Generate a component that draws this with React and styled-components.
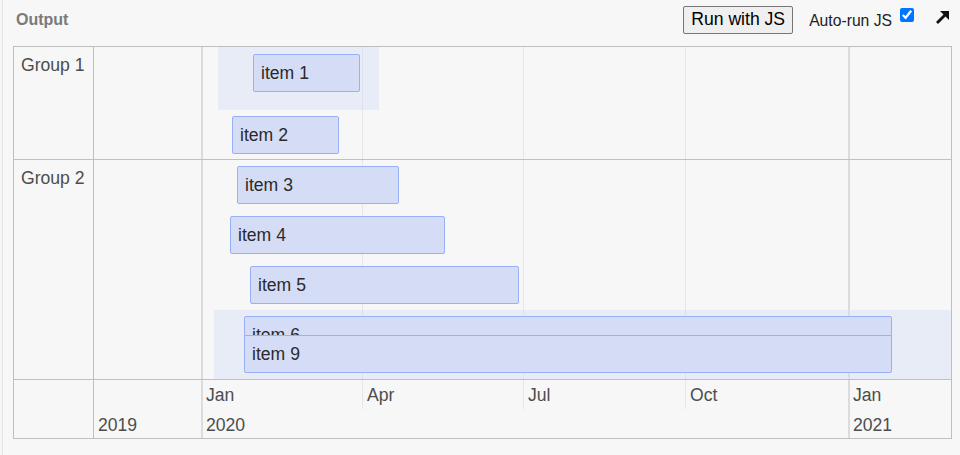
import React from "react";
import styled, { createGlobalStyle } from "styled-components";

const GlobalStyle = createGlobalStyle`
  html, body {
    margin: 0;
    padding: 0;
    background: #f7f7f7;
    width: 960px;
    height: 455px;
    overflow: hidden;
  }
  body {
    font-family: "Liberation Sans", Arial, sans-serif;
  }
`;

// x positions are relative to the item panel (it starts at page x = 94)
const majorLines = [107, 754];
const minorLines = [268, 429, 591];

const minorLabels = [
  { x: 112, text: "Jan" },
  { x: 273, text: "Apr" },
  { x: 434, text: "Jul" },
  { x: 596, text: "Oct" },
  { x: 759, text: "Jan" },
];

const majorLabels = [
  { x: 4, text: "2019" },
  { x: 112, text: "2020" },
  { x: 759, text: "2021" },
];

const groups = [
  {
    name: "Group 1",
    height: 113,
    backgrounds: [{ left: 124, top: 0, width: 161, height: 63 }],
    items: [
      { id: 1, left: 159, top: 7, width: 107 },
      { id: 2, left: 138, top: 69, width: 107 },
    ],
  },
  {
    name: "Group 2",
    height: 220,
    backgrounds: [{ left: 120, top: 150, width: 737, height: 69 }],
    items: [
      { id: 3, left: 143, top: 6, width: 162 },
      { id: 4, left: 136, top: 56, width: 215 },
      { id: 5, left: 156, top: 106, width: 269 },
      { id: 6, left: 150, top: 156, width: 648 },
      { id: 9, left: 150, top: 175, width: 648 },
    ],
  },
];

function ExpandIcon() {
  return (
    <svg width="13" height="13" viewBox="0 0 13 13">
      <polygon points="4,0 13,0 13,9" fill="#111" />
      <line x1="1" y1="12" x2="9" y2="4" stroke="#111" strokeWidth="2.8" />
    </svg>
  );
}

export default function App() {
  return (
    <Page>
      <GlobalStyle />
      <Header>
        <Title>Output</Title>
        <Controls>
          <RunButton>Run with JS</RunButton>
          <AutoRun>
            Auto-run JS
            <Check type="checkbox" defaultChecked />
          </AutoRun>
          <Expand>
            <ExpandIcon />
          </Expand>
        </Controls>
      </Header>

      <Timeline>
        <LabelColumn>
          {groups.map((g) => (
            <GroupLabel key={g.name} $height={g.height}>
              {g.name}
            </GroupLabel>
          ))}
          <AxisSpacer />
        </LabelColumn>

        <Panel>
          {minorLines.map((x) => (
            <GridLine key={x} style={{ left: x }} $minor />
          ))}
          {majorLines.map((x) => (
            <GridLine key={x} style={{ left: x }} />
          ))}

          {groups.map((g) => (
            <GroupRow key={g.name} $height={g.height}>
              {g.backgrounds.map((b, i) => (
                <Background key={i} style={b} />
              ))}
              {g.items.map((it) => (
                <Item
                  key={it.id}
                  style={{ left: it.left, top: it.top, width: it.width }}
                >
                  item {it.id}
                </Item>
              ))}
            </GroupRow>
          ))}

          <Axis>
            <AxisRow $offset={1}>
              {minorLabels.map((l) => (
                <AxisLabel key={l.x} style={{ left: l.x }}>
                  {l.text}
                </AxisLabel>
              ))}
            </AxisRow>
            <AxisRow $offset={2}>
              {majorLabels.map((l) => (
                <AxisLabel key={l.x} style={{ left: l.x }}>
                  {l.text}
                </AxisLabel>
              ))}
            </AxisRow>
          </Axis>
        </Panel>
      </Timeline>
    </Page>
  );
}

const Page = styled.div`
  margin-left: 2px;
  height: 455px;
  border-left: 1px solid #e4e4e4;
  box-sizing: border-box;
`;

const Header = styled.div`
  height: 39px;
  display: flex;
  align-items: center;
  justify-content: space-between;
  padding: 0 11px 0 13px;
`;

const Title = styled.div`
  font-size: 16px;
  font-weight: bold;
  color: #7a7a7a;
`;

const Controls = styled.div`
  display: flex;
  align-items: center;
`;

const RunButton = styled.button`
  width: 110px;
  height: 28px;
  padding: 0;
  background: #efefef;
  border: 1px solid #767676;
  border-radius: 2px;
  font-family: "Liberation Sans", Arial, sans-serif;
  font-size: 17.6px;
  color: #000;
  margin-right: 16px;
`;

const AutoRun = styled.label`
  display: flex;
  align-items: flex-start;
  font-size: 15.7px;
  color: #222;
  padding-top: 2px;
`;

const Check = styled.input`
  width: 14px;
  height: 14px;
  margin: -4px 0 0 8px;
  accent-color: #0075ff;
`;

const Expand = styled.div`
  display: flex;
  margin-left: 22px;
  margin-top: -4px;
`;

const Timeline = styled.div`
  margin: 7px 0 0 10px;
  width: 939px;
  height: 393px;
  box-sizing: border-box;
  border: 1px solid #bfbfbf;
  display: flex;
  font-size: 17.6px;
  color: #4d4d4d;
`;

const LabelColumn = styled.div`
  width: 80px;
  box-sizing: border-box;
  border-right: 1px solid #bfbfbf;
  display: flex;
  flex-direction: column;
`;

const GroupLabel = styled.div`
  height: ${(p) => p.$height}px;
  box-sizing: border-box;
  border-bottom: 1px solid #bfbfbf;
  padding: 8px 0 0 7px;
  line-height: 20px;
`;

const AxisSpacer = styled.div`
  flex: 1;
`;

const Panel = styled.div`
  flex: 1;
  position: relative;
  display: flex;
  flex-direction: column;
`;

const GridLine = styled.div`
  position: absolute;
  top: 0;
  height: ${(p) => (p.$minor ? "362px" : "100%")};
  width: ${(p) => (p.$minor ? "1px" : "2px")};
  background: ${(p) => (p.$minor ? "#e6e6e6" : "#dcdcdc")};
`;

const GroupRow = styled.div`
  position: relative;
  height: ${(p) => p.$height}px;
  box-sizing: border-box;
  border-bottom: 1px solid #bfbfbf;
`;

const Background = styled.div`
  position: absolute;
  background: rgba(213, 221, 246, 0.42);
`;

const Item = styled.div`
  position: absolute;
  height: 38px;
  box-sizing: border-box;
  background: #d5ddf6;
  border: 1px solid #97b0f8;
  border-radius: 2px;
  padding-left: 7px;
  line-height: 36px;
  color: #2a2a2a;
  white-space: nowrap;
  overflow: hidden;
`;

const Axis = styled.div`
  flex: 1;
  display: flex;
  flex-direction: column;
`;

const AxisRow = styled.div`
  position: relative;
  height: 29px;
  padding-top: ${(p) => p.$offset}px;
  box-sizing: border-box;
`;

const AxisLabel = styled.div`
  position: absolute;
  line-height: 29px;
`;
